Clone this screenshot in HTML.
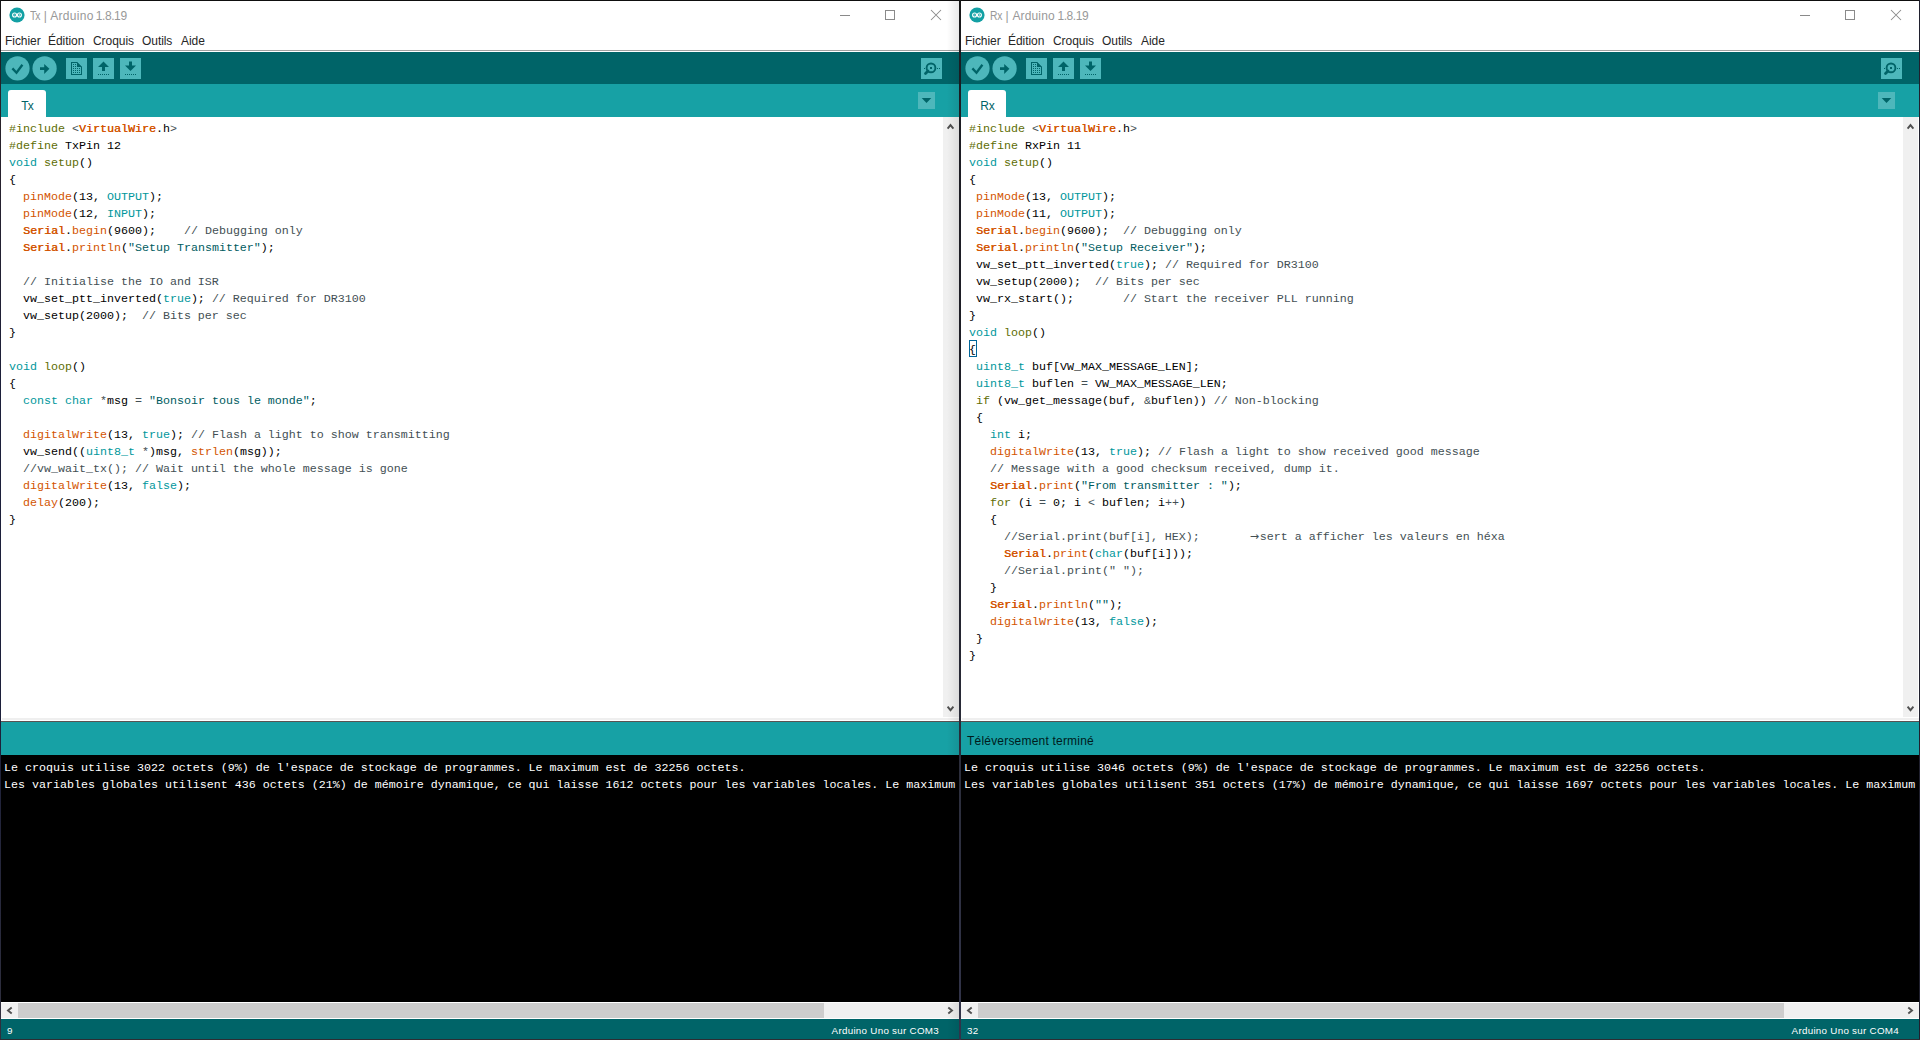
<!DOCTYPE html>
<html lang="fr">
<head>
<meta charset="utf-8">
<title>Arduino IDE - Tx / Rx</title>
<style>
*{box-sizing:border-box;margin:0;padding:0}
html,body{width:1920px;height:1040px;overflow:hidden;background:#fff}
body{font-family:"Liberation Sans",sans-serif;font-size:12px;color:#000}
.screen{position:relative;width:1920px;height:1040px;overflow:hidden;background:#fff}
.win{position:absolute;top:0;width:960px;height:1040px;background:#fff;overflow:hidden}
.w-left{left:0}
.w-right{left:960px}
.win>*{position:absolute}
.bt{left:0;top:0;width:960px;height:1px;background:#0e0e0e;z-index:5}
.bl{left:0;top:0;width:1px;height:1040px;background:linear-gradient(#141416 0,#2a2228 8%,#1c1f3a 38%,#1c1f3a 68%,#30303e 100%);z-index:5}
.br{left:959px;top:0;width:1px;height:1040px;background:#20202e;z-index:5}
.bb{left:0;top:1039px;width:960px;height:1px;background:#2d2d33;z-index:5}
.logo{left:9px;top:7px;width:16px;height:16px}
.title{left:0;top:8px;height:16px;width:300px;line-height:16px;font-size:12px;color:#999;white-space:pre}
.title span{position:absolute;top:0}
.t1{left:30px;display:inline-block;transform:scaleX(.86);transform-origin:0 0}.t1 u{text-decoration:none;letter-spacing:-1.3px}.t2{left:43.7px}.t3{left:50.2px;letter-spacing:.3px}.t4{left:95.7px;letter-spacing:-.4px}
.w-right .t1{left:30.4px}.w-right .t1 u{letter-spacing:-.2px}.w-right .t2{left:45.5px}.w-right .t3{left:52.4px;letter-spacing:.15px}.w-right .t4{left:97.4px}
.ctl{top:0;height:30px;width:46px}
.ctl svg{position:absolute;left:0;top:0}
.menu{top:33px;height:16px;line-height:16px;font-size:12px;color:#262626;white-space:nowrap;letter-spacing:-.06px}
.m1{left:5px}.m2{left:48px}.m3{left:93px}.m4{left:142px}.m5{left:181px}
.sep{left:1px;top:50px;width:958px;height:1px;background:#a0a0a0}
.toolbar{left:1px;top:52px;width:958px;height:32px;background:#006468}
.toolbar svg{position:absolute;left:0;top:0}
.tabs{left:1px;top:84px;width:958px;height:33px;background:#17a1a5}
.tab{position:absolute;left:7px;top:6px;width:38px;height:27px;background:#fff;border-radius:3px 3px 0 0;color:#006468;font-size:12px;text-align:center;line-height:33px;padding-left:1px}
.tab u{text-decoration:none;letter-spacing:-1px}
.w-right .tab u{letter-spacing:-.2px}
.dd{position:absolute;left:917px;top:8px;width:17px;height:17px;background:#4db7bb}
.dd svg{position:absolute;left:0;top:0}
.editor{left:1px;top:117px;width:942px;height:600px;background:#fff}
.code{position:absolute;left:8px;top:4px;font-family:"Liberation Mono",monospace;font-size:11.6667px;line-height:17px;color:#000}
.ln{height:17px;white-space:pre}
.p{color:#5e6d03}.k{color:#d35400}.t{color:#00979c}.c{color:#434f54}.s{color:#005c5f}.o{color:#434f54}
b.k{font-weight:normal;text-shadow:.4px 0 0 #d35400}
.ar{display:inline-block;width:11px;height:17px;vertical-align:top;overflow:visible;font-family:"DejaVu Sans","Liberation Sans",sans-serif;font-size:11px;line-height:17px;text-align:center;position:relative;top:-1px}
.brk{position:absolute;left:8px;top:223px;width:8px;height:17px;border:1px solid #069}
.vsb{left:943px;top:117px;width:16px;height:600px;background:#f0f0f0}
.vsb svg{position:absolute;left:0}
.w-right .vsb{width:15px}
.gap{left:1px;top:717px;width:958px;height:5px;background:linear-gradient(#5b5353,#5b5353) 0 4px/100% 1px no-repeat,linear-gradient(#efefef,#efefef) 1px 1px/957px 2px no-repeat,#fff}
.w-right .gap{left:1px;top:717px;width:958px;height:5px;background:linear-gradient(#5b5353,#5b5353) 0 4px/100% 1px no-repeat,linear-gradient(#efefef,#efefef) 1px 1px/957px 2px no-repeat,#fff}
.status{left:1px;top:722px;width:958px;height:33px;background:#17a1a5;color:#001b1c;font-size:12px;line-height:16px;padding:11px 0 0 6px;letter-spacing:.2px;white-space:nowrap}
.console{left:1px;top:755px;width:958px;height:247px;background:#000;color:#fff;font-family:"Liberation Mono",monospace;font-size:11.6667px;line-height:17px;white-space:pre;overflow:hidden;padding:5px 0 0 3px}
.hsb{left:1px;top:1002px;width:958px;height:17px;background:#f0f0f0;border-top:1px solid #fff;border-bottom:1px solid #fff}
.hsb i{position:absolute;left:17px;top:0;height:15px;background:#cdcdcd}
.w-left .hsb i{width:806px}
.w-right .hsb i{width:806px}
.hsb svg{position:absolute;top:0}
.footer{left:1px;top:1019px;width:958px;height:20px;background:#006468;color:#fff;font-size:9.8px;line-height:12px;white-space:nowrap}
.footer .no{position:absolute;left:6px;top:6px;letter-spacing:.4px}
.footer .bd{position:absolute;right:20px;top:6px;letter-spacing:.28px}
.divider{position:absolute;left:959px;top:0;width:2px;height:1040px;background:linear-gradient(#161616 0,#1c1c22 5%,#1e1e28 50%,#2c2e3c 75%,#32344a 100%);z-index:9}
.shadow{position:absolute;left:947px;top:1px;width:12px;height:1038px;background:linear-gradient(90deg,rgba(0,0,0,0),rgba(0,0,0,.085));z-index:8}

</style>
</head>
<body>
<div class="screen">
<div class="win w-left">
<div class="logo"><svg width="16" height="16" viewBox="0 0 16 16"><circle cx="8" cy="8" r="7.6" fill="#13a0a4"/><circle cx="5.6" cy="8" r="2" fill="none" stroke="#fff" stroke-width="1.1"/><circle cx="10.4" cy="8" r="2" fill="none" stroke="#fff" stroke-width="1.1"/><path d="M4.7 8h1.8M9.5 8h1.8M10.4 7.1v1.8" stroke="#d8f0f0" stroke-width=".6"/></svg></div>
<div class="title"><span class="t1"><u>T</u>x </span><span class="t2">| </span><span class="t3">Arduino </span><span class="t4">1.8.19</span></div>
<div class="ctl" style="left:822px"><svg width="46" height="30"><path d="M18 15.5h10" stroke="#8a8a8a" stroke-width="1"/></svg></div>
<div class="ctl" style="left:867px"><svg width="46" height="30"><rect x="18.5" y="10.5" width="9" height="9" fill="none" stroke="#8a8a8a" stroke-width="1"/></svg></div>
<div class="ctl" style="left:913px"><svg width="46" height="30"><path d="M18 10l10 10M28 10l-10 10" stroke="#8a8a8a" stroke-width="1.05"/></svg></div>
<div class="menu m1">Fichier</div><div class="menu m2">Édition</div><div class="menu m3">Croquis</div><div class="menu m4">Outils</div><div class="menu m5">Aide</div>
<div class="sep"></div>
<div class="toolbar"><svg width="958" height="32" viewBox="1 52 958 32">
<g fill="#4db7bb"><circle cx="17.5" cy="68.4" r="12.1"/><circle cx="44.6" cy="68.4" r="12.1"/><rect x="66" y="58" width="21" height="21"/><rect x="93" y="58" width="21" height="21"/><rect x="120" y="58" width="21" height="21"/><rect x="921" y="58" width="21" height="21"/></g>
<g fill="#006468" stroke="none">
<path d="M12.4 68.4L16.5 72.8L22.4 64.8" fill="none" stroke="#006468" stroke-width="2.300"/>
<path d="M40 67.3h4.2v-3.4l5.2 4.8-5.2 5.2v-3.8H40z"/>
<path d="M71 62h6l5 5v8H71zM72 63v11h9v-7h-4v-4z" fill-rule="evenodd"/>
<path d="M77 62l5 5h-5z"/>
<g id="dots"><rect x="73" y="64" width="1" height="1"/><rect x="75" y="64" width="1" height="1"/><rect x="73" y="66" width="1" height="1"/><rect x="75" y="66" width="1" height="1"/><rect x="73" y="68" width="1" height="1"/><rect x="75" y="68" width="1" height="1"/><rect x="77" y="68" width="1" height="1"/><rect x="79" y="68" width="1" height="1"/><rect x="73" y="70" width="1" height="1"/><rect x="75" y="70" width="1" height="1"/><rect x="77" y="70" width="1" height="1"/><rect x="79" y="70" width="1" height="1"/><rect x="73" y="72" width="1" height="1"/><rect x="75" y="72" width="1" height="1"/><rect x="77" y="72" width="1" height="1"/><rect x="79" y="72" width="1" height="1"/></g>
<path d="M103.5 61.6l5.5 5.4h-4v4h-3v-4h-4z"/>
<path d="M98 74h1v1h-1zM100 74h1v1h-1zM102 74h1v1h-1zM104 74h1v1h-1zM106 74h1v1h-1zM108 74h1v1h-1z"/>
<path d="M129 61.5h3v4h4l-5.5 5.5-5.5-5.500h4z"/>
<path d="M125 74h1v1h-1zM127 74h1v1h-1zM129 74h1v1h-1zM131 74h1v1h-1zM133 74h1v1h-1zM135 74h1v1h-1z"/>
<circle cx="931" cy="67.900" r="4.400" fill="none" stroke="#006468" stroke-width="1.900"/>
<rect x="930" y="67" width="2" height="2"/>
<path d="M928 71l-2.500 2.500" stroke="#006468" stroke-width="2.800" stroke-linecap="round" fill="none"/>
<rect x="924" y="68" width="1" height="1"/><rect x="937" y="68" width="1" height="1"/><rect x="939" y="68" width="1" height="1"/>
</g></svg></div>
<div class="tabs"><div class="tab"><u>T</u>x</div><div class="dd"><svg width="17" height="17"><path d="M3.700 6.100h9.600l-4.800 5z" fill="#006468"/></svg></div></div>
<div class="editor"><div class="code">
<div class="ln"><span class="p">#include</span> <span class="o">&lt;</span><b class="k">VirtualWire</b>.h<span class="o">&gt;</span></div>
<div class="ln"><span class="p">#define</span> TxPin 12</div>
<div class="ln"><span class="t">void</span> <span class="p">setup</span>()</div>
<div class="ln">{</div>
<div class="ln">  <span class="k">pinMode</span>(13, <span class="t">OUTPUT</span>);</div>
<div class="ln">  <span class="k">pinMode</span>(12, <span class="t">INPUT</span>);</div>
<div class="ln">  <b class="k">Serial</b>.<span class="k">begin</span>(9600);    <span class="c">// Debugging only</span></div>
<div class="ln">  <b class="k">Serial</b>.<span class="k">println</span>(<span class="s">"Setup Transmitter"</span>);</div>
<div class="ln">&nbsp;</div>
<div class="ln">  <span class="c">// Initialise the IO and ISR</span></div>
<div class="ln">  vw_set_ptt_inverted(<span class="t">true</span>); <span class="c">// Required for DR3100</span></div>
<div class="ln">  vw_setup(2000);  <span class="c">// Bits per sec</span></div>
<div class="ln">}</div>
<div class="ln">&nbsp;</div>
<div class="ln"><span class="t">void</span> <span class="p">loop</span>()</div>
<div class="ln">{</div>
<div class="ln">  <span class="t">const</span> <span class="t">char</span> <span class="o">*</span>msg <span class="o">=</span> <span class="s">"Bonsoir tous le monde"</span>;</div>
<div class="ln">&nbsp;</div>
<div class="ln">  <span class="k">digitalWrite</span>(13, <span class="t">true</span>); <span class="c">// Flash a light to show transmitting</span></div>
<div class="ln">  vw_send((<span class="t">uint8_t</span> <span class="o">*</span>)msg, <span class="k">strlen</span>(msg));</div>
<div class="ln">  <span class="c">//vw_wait_tx(); // Wait until the whole message is gone</span></div>
<div class="ln">  <span class="k">digitalWrite</span>(13, <span class="t">false</span>);</div>
<div class="ln">  <span class="k">delay</span>(200);</div>
<div class="ln">}</div>
</div></div>
<div class="vsb"><svg style="top:0" width="16" height="600"><path d="M4.600 11.700l2.900-3.600 2.900 3.600M4.600 589.600l2.900 3.600 2.900-3.600" fill="none" stroke="#505050" stroke-width="1.900"/></svg></div>
<div class="gap"></div>
<div class="status"></div>
<div class="console">Le croquis utilise 3022 octets (9%) de l'espace de stockage de programmes. Le maximum est de 32256 octets.
Les variables globales utilisent 436 octets (21%) de mémoire dynamique, ce qui laisse 1612 octets pour les variables locales. Le maximum est de 2048 octets.</div>
<div class="hsb"><i></i><svg style="left:0" width="958" height="15"><path d="M10.700 4.500l-3.700 3 3.700 3M947.300 4.500l3.700 3-3.700 3" fill="none" stroke="#505050" stroke-width="1.900"/></svg></div>
<div class="footer"><span class="no">9</span><span class="bd">Arduino Uno sur COM3</span></div>
<div class="bt"></div><div class="bl"></div><div class="br"></div><div class="bb"></div>
</div>

<div class="win w-right">
<div class="logo"><svg width="16" height="16" viewBox="0 0 16 16"><circle cx="8" cy="8" r="7.6" fill="#13a0a4"/><circle cx="5.6" cy="8" r="2" fill="none" stroke="#fff" stroke-width="1.1"/><circle cx="10.4" cy="8" r="2" fill="none" stroke="#fff" stroke-width="1.1"/><path d="M4.7 8h1.8M9.5 8h1.8M10.4 7.1v1.8" stroke="#d8f0f0" stroke-width=".6"/></svg></div>
<div class="title"><span class="t1"><u>R</u>x </span><span class="t2">| </span><span class="t3">Arduino </span><span class="t4">1.8.19</span></div>
<div class="ctl" style="left:822px"><svg width="46" height="30"><path d="M18 15.5h10" stroke="#8a8a8a" stroke-width="1"/></svg></div>
<div class="ctl" style="left:867px"><svg width="46" height="30"><rect x="18.5" y="10.5" width="9" height="9" fill="none" stroke="#8a8a8a" stroke-width="1"/></svg></div>
<div class="ctl" style="left:913px"><svg width="46" height="30"><path d="M18 10l10 10M28 10l-10 10" stroke="#8a8a8a" stroke-width="1.05"/></svg></div>
<div class="menu m1">Fichier</div><div class="menu m2">Édition</div><div class="menu m3">Croquis</div><div class="menu m4">Outils</div><div class="menu m5">Aide</div>
<div class="sep"></div>
<div class="toolbar"><svg width="958" height="32" viewBox="1 52 958 32">
<g fill="#4db7bb"><circle cx="17.5" cy="68.4" r="12.1"/><circle cx="44.6" cy="68.4" r="12.1"/><rect x="66" y="58" width="21" height="21"/><rect x="93" y="58" width="21" height="21"/><rect x="120" y="58" width="21" height="21"/><rect x="921" y="58" width="21" height="21"/></g>
<g fill="#006468" stroke="none">
<path d="M12.4 68.4L16.5 72.8L22.4 64.8" fill="none" stroke="#006468" stroke-width="2.300"/>
<path d="M40 67.3h4.2v-3.4l5.2 4.8-5.2 5.2v-3.8H40z"/>
<path d="M71 62h6l5 5v8H71zM72 63v11h9v-7h-4v-4z" fill-rule="evenodd"/>
<path d="M77 62l5 5h-5z"/>
<g id="dots"><rect x="73" y="64" width="1" height="1"/><rect x="75" y="64" width="1" height="1"/><rect x="73" y="66" width="1" height="1"/><rect x="75" y="66" width="1" height="1"/><rect x="73" y="68" width="1" height="1"/><rect x="75" y="68" width="1" height="1"/><rect x="77" y="68" width="1" height="1"/><rect x="79" y="68" width="1" height="1"/><rect x="73" y="70" width="1" height="1"/><rect x="75" y="70" width="1" height="1"/><rect x="77" y="70" width="1" height="1"/><rect x="79" y="70" width="1" height="1"/><rect x="73" y="72" width="1" height="1"/><rect x="75" y="72" width="1" height="1"/><rect x="77" y="72" width="1" height="1"/><rect x="79" y="72" width="1" height="1"/></g>
<path d="M103.5 61.6l5.5 5.4h-4v4h-3v-4h-4z"/>
<path d="M98 74h1v1h-1zM100 74h1v1h-1zM102 74h1v1h-1zM104 74h1v1h-1zM106 74h1v1h-1zM108 74h1v1h-1z"/>
<path d="M129 61.5h3v4h4l-5.5 5.5-5.5-5.500h4z"/>
<path d="M125 74h1v1h-1zM127 74h1v1h-1zM129 74h1v1h-1zM131 74h1v1h-1zM133 74h1v1h-1zM135 74h1v1h-1z"/>
<circle cx="931" cy="67.900" r="4.400" fill="none" stroke="#006468" stroke-width="1.900"/>
<rect x="930" y="67" width="2" height="2"/>
<path d="M928 71l-2.500 2.500" stroke="#006468" stroke-width="2.800" stroke-linecap="round" fill="none"/>
<rect x="924" y="68" width="1" height="1"/><rect x="937" y="68" width="1" height="1"/><rect x="939" y="68" width="1" height="1"/>
</g></svg></div>
<div class="tabs"><div class="tab"><u>R</u>x</div><div class="dd"><svg width="17" height="17"><path d="M3.700 6.100h9.600l-4.800 5z" fill="#006468"/></svg></div></div>
<div class="editor"><div class="code">
<div class="ln"><span class="p">#include</span> <span class="o">&lt;</span><b class="k">VirtualWire</b>.h<span class="o">&gt;</span></div>
<div class="ln"><span class="p">#define</span> RxPin 11</div>
<div class="ln"><span class="t">void</span> <span class="p">setup</span>()</div>
<div class="ln">{</div>
<div class="ln"> <span class="k">pinMode</span>(13, <span class="t">OUTPUT</span>);</div>
<div class="ln"> <span class="k">pinMode</span>(11, <span class="t">OUTPUT</span>);</div>
<div class="ln"> <b class="k">Serial</b>.<span class="k">begin</span>(9600);  <span class="c">// Debugging only</span></div>
<div class="ln"> <b class="k">Serial</b>.<span class="k">println</span>(<span class="s">"Setup Receiver"</span>);</div>
<div class="ln"> vw_set_ptt_inverted(<span class="t">true</span>); <span class="c">// Required for DR3100</span></div>
<div class="ln"> vw_setup(2000);  <span class="c">// Bits per sec</span></div>
<div class="ln"> vw_rx_start();       <span class="c">// Start the receiver PLL running</span></div>
<div class="ln">}</div>
<div class="ln"><span class="t">void</span> <span class="p">loop</span>()</div>
<div class="ln">{</div>
<div class="ln"> <span class="t">uint8_t</span> buf[VW_MAX_MESSAGE_LEN];</div>
<div class="ln"> <span class="t">uint8_t</span> buflen <span class="o">=</span> VW_MAX_MESSAGE_LEN;</div>
<div class="ln"> <span class="p">if</span> (vw_get_message(buf, <span class="o">&amp;</span>buflen)) <span class="c">// Non-blocking</span></div>
<div class="ln"> {</div>
<div class="ln">   <span class="t">int</span> i;</div>
<div class="ln">   <span class="k">digitalWrite</span>(13, <span class="t">true</span>); <span class="c">// Flash a light to show received good message</span></div>
<div class="ln">   <span class="c">// Message with a good checksum received, dump it.</span></div>
<div class="ln">   <b class="k">Serial</b>.<span class="k">print</span>(<span class="s">"From transmitter : "</span>);</div>
<div class="ln">   <span class="p">for</span> (i <span class="o">=</span> 0; i <span class="o">&lt;</span> buflen; i<span class="o">+</span><span class="o">+</span>)</div>
<div class="ln">   {</div>
<div class="ln">     <span class="c">//Serial.print(buf[i], HEX);       <span class="ar">→</span>sert a afficher les valeurs en héxa</span></div>
<div class="ln">     <b class="k">Serial</b>.<span class="k">print</span>(<span class="t">char</span>(buf[i]));</div>
<div class="ln">     <span class="c">//Serial.print(" ");</span></div>
<div class="ln">   }</div>
<div class="ln">   <b class="k">Serial</b>.<span class="k">println</span>(<span class="s">""</span>);</div>
<div class="ln">   <span class="k">digitalWrite</span>(13, <span class="t">false</span>);</div>
<div class="ln"> }</div>
<div class="ln">}</div>
</div><div class="brk"></div></div>
<div class="vsb"><svg style="top:0" width="16" height="600"><path d="M4.600 11.700l2.900-3.600 2.900 3.600M4.600 589.600l2.900 3.600 2.900-3.600" fill="none" stroke="#505050" stroke-width="1.900"/></svg></div>
<div class="gap"></div>
<div class="status">Téléversement terminé</div>
<div class="console">Le croquis utilise 3046 octets (9%) de l'espace de stockage de programmes. Le maximum est de 32256 octets.
Les variables globales utilisent 351 octets (17%) de mémoire dynamique, ce qui laisse 1697 octets pour les variables locales. Le maximum est de 2048 octets.</div>
<div class="hsb"><i></i><svg style="left:0" width="958" height="15"><path d="M10.700 4.500l-3.700 3 3.700 3M947.300 4.500l3.700 3-3.700 3" fill="none" stroke="#505050" stroke-width="1.900"/></svg></div>
<div class="footer"><span class="no">32</span><span class="bd">Arduino Uno sur COM4</span></div>
<div class="bt"></div><div class="bl"></div><div class="br"></div><div class="bb"></div>
</div>

<div class="divider"></div>
<div class="shadow"></div>
</div>
</body>
</html>
